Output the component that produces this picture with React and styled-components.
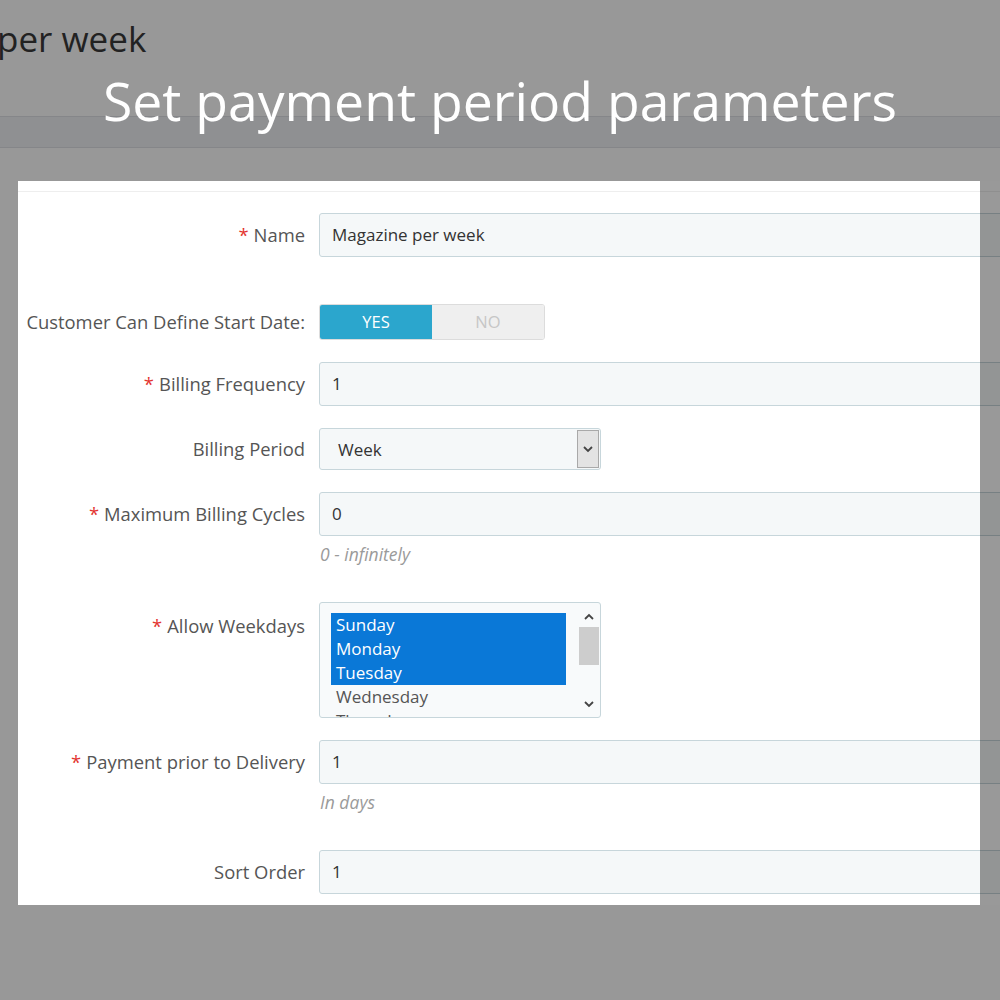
import React from "react";
import styled, { createGlobalStyle } from "styled-components";

const GlobalStyle = createGlobalStyle`
    html, body {
        margin: 0;
        padding: 0;
        width: 1000px;
        height: 1000px;
        overflow: hidden;
        background: #989898;
        font-family: 'Open Sans', 'Noto Sans', sans-serif;
    }
`;

const Page = styled.div`
    position: relative;
    width: 1000px;
    height: 1000px;
    overflow: hidden;
    background: #989898;
`;

const Header = styled.div`
    position: relative;
    height: 181px;
`;

const PageTitle = styled.h1`
    margin: 0;
    padding-top: 16px;
    margin-left: -3px;
    font-size: 35px;
    font-weight: 400;
    line-height: 46px;
    color: #222222;
`;

const ToolBand = styled.div`
    margin-top: 54px;
    height: 30px;
    background: #8f9092;
    border-top: 1px solid #858689;
    border-bottom: 1px solid #858689;
`;

const Headline = styled.div`
    position: absolute;
    top: 65px;
    left: 0;
    right: 0;
    text-align: center;
    font-size: 53.5px;
    font-weight: 500;
    line-height: 72px;
    color: #ffffff;
`;

const Panel = styled.div`
    position: relative;
    margin-left: 18px;
    width: 1100px;
    height: 724px;
    background: #ffffff;
    padding-top: 10px;
    box-sizing: border-box;
`;

const PanelInner = styled.div`
    border-top: 1px solid #eeeeee;
    padding-top: 21px;
`;

const Row = styled.div`
    display: grid;
    grid-template-columns: 287px 1fr;
    column-gap: 14px;
    margin-bottom: ${(p) => p.$after || 22}px;
`;

const Label = styled.div`
    text-align: right;
    font-size: 18.4px;
    color: #555555;
    line-height: ${(p) => p.$h || 44}px;
    white-space: nowrap;
`;

const Required = styled.span`
    color: #e3342f;
    margin-right: 5px;
`;

const Field = styled.div`
    display: flex;
    flex-direction: column;
`;

const TextInput = styled.div`
    width: 700px;
    height: 44px;
    box-sizing: border-box;
    background: #f5f8f9;
    border: 1px solid #c7d6db;
    border-radius: 3px;
    padding-left: 12px;
    font-size: 17px;
    line-height: 42px;
    color: #333333;
`;

const Help = styled.div`
    margin-top: 7px;
    font-size: 17.5px;
    font-style: italic;
    line-height: 23px;
    color: #9a9a9a;
    padding-left: 1px;
`;

const Toggle = styled.div`
    display: flex;
    width: 226px;
    height: 36px;
    border-radius: 3px;
    overflow: hidden;
    border: 1px solid #dcdcdc;
    box-sizing: border-box;
`;

const ToggleOption = styled.div`
    flex: 1;
    text-align: center;
    font-size: 16.5px;
    line-height: 34px;
    background: ${(p) => (p.$active ? "#2ba6cd" : "#efefef")};
    color: ${(p) => (p.$active ? "#ffffff" : "#c6c6c6")};
`;

const Select = styled.div`
    width: 282px;
    height: 42px;
    box-sizing: border-box;
    background: #f5f8f9;
    border: 1px solid #c7d6db;
    border-radius: 3px;
    display: flex;
    align-items: center;
    justify-content: space-between;
    padding-left: 18px;
    font-size: 17px;
    color: #333333;
`;

const SelectArrow = styled.div`
    width: 22px;
    height: 38px;
    margin-right: 1px;
    background: #e3e3e3;
    border: 1px solid #a9a9a9;
    box-sizing: border-box;
    display: flex;
    align-items: center;
    justify-content: center;
`;

const MultiSelect = styled.div`
    display: flex;
    width: 282px;
    height: 116px;
    box-sizing: border-box;
    background: #f8fafb;
    border: 1px solid #c7d6db;
    border-radius: 3px;
    overflow: hidden;
`;

const OptionList = styled.div`
    flex: 1;
    padding: 10px 12px 0 11px;
`;

const Option = styled.div`
    height: 24px;
    line-height: 24px;
    padding-left: 5px;
    font-size: 17px;
    background: ${(p) => (p.$selected ? "#0a78d7" : "transparent")};
    color: ${(p) => (p.$selected ? "#ffffff" : "#555555")};
`;

const Scrollbar = styled.div`
    width: 22px;
    display: flex;
    flex-direction: column;
    align-items: center;
    padding: 4px 0;
    box-sizing: border-box;
`;

const ScrollArrow = styled.div`
    height: 18px;
    display: flex;
    align-items: center;
    justify-content: center;
`;

const ScrollTrack = styled.div`
    flex: 1;
    width: 100%;
`;

const ScrollThumb = styled.div`
    width: 20px;
    height: 38px;
    margin: 2px auto 0;
    background: #cdcdcd;
`;

const Shade = styled.div`
    position: absolute;
    top: 0;
    bottom: 0;
    left: 962px;
    right: 0;
    background: rgba(0, 0, 0, 0.4);
`;

const Chevron = ({ up }) => (
    <svg width="10" height="7" viewBox="0 0 10 7">
        <path
            d={up ? "M1 6 L5 2 L9 6" : "M1 1 L5 5 L9 1"}
            fill="none"
            stroke="#444"
            strokeWidth="1.8"
        />
    </svg>
);

const FieldLabel = ({ required, children, h }) => (
    <Label $h={h}>
        {required && <Required>*</Required>}
        {children}
    </Label>
);

const weekdays = [
    { name: "Sunday", selected: true },
    { name: "Monday", selected: true },
    { name: "Tuesday", selected: true },
    { name: "Wednesday", selected: false },
    { name: "Thursday", selected: false },
];

const App = () => {
    return (
        <Page>
            <GlobalStyle />
            <Header>
                <PageTitle>per week</PageTitle>
                <ToolBand />
                <Headline>Set payment period parameters</Headline>
            </Header>

            <Panel>
                <PanelInner>
                    <Row $after={47}>
                        <FieldLabel required>Name</FieldLabel>
                        <TextInput>Magazine per week</TextInput>
                    </Row>

                    <Row>
                        <FieldLabel h={36}>Customer Can Define Start Date:</FieldLabel>
                        <Toggle>
                            <ToggleOption $active>YES</ToggleOption>
                            <ToggleOption>NO</ToggleOption>
                        </Toggle>
                    </Row>

                    <Row>
                        <FieldLabel required>Billing Frequency</FieldLabel>
                        <TextInput>1</TextInput>
                    </Row>

                    <Row>
                        <FieldLabel h={42}>Billing Period</FieldLabel>
                        <Field>
                            <Select>
                                Week
                                <SelectArrow>
                                    <Chevron />
                                </SelectArrow>
                            </Select>
                        </Field>
                    </Row>

                    <Row $after={36}>
                        <FieldLabel required>Maximum Billing Cycles</FieldLabel>
                        <Field>
                            <TextInput>0</TextInput>
                            <Help>0 - infinitely</Help>
                        </Field>
                    </Row>

                    <Row>
                        <FieldLabel required h={48}>Allow Weekdays</FieldLabel>
                        <Field>
                            <MultiSelect>
                                <OptionList>
                                    {weekdays.map((d) => (
                                        <Option key={d.name} $selected={d.selected}>
                                            {d.name}
                                        </Option>
                                    ))}
                                </OptionList>
                                <Scrollbar>
                                    <ScrollArrow><Chevron up /></ScrollArrow>
                                    <ScrollTrack>
                                        <ScrollThumb />
                                    </ScrollTrack>
                                    <ScrollArrow><Chevron /></ScrollArrow>
                                </Scrollbar>
                            </MultiSelect>
                        </Field>
                    </Row>

                    <Row $after={36}>
                        <FieldLabel required>Payment prior to Delivery</FieldLabel>
                        <Field>
                            <TextInput>1</TextInput>
                            <Help>In days</Help>
                        </Field>
                    </Row>

                    <Row>
                        <FieldLabel>Sort Order</FieldLabel>
                        <TextInput>1</TextInput>
                    </Row>
                </PanelInner>
                <Shade />
            </Panel>
        </Page>
    );
};

export default App;
